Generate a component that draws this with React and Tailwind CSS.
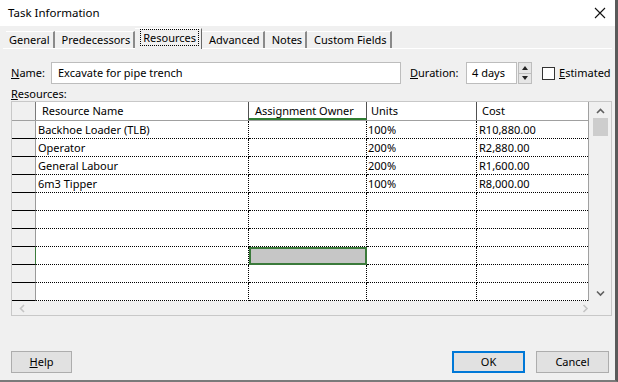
import React from "react";

const rows = [
  { name: "Backhoe Loader (TLB)", units: "100%", cost: "R10,880.00" },
  { name: "Operator", units: "200%", cost: "R2,880.00" },
  { name: "General Labour", units: "200%", cost: "R1,600.00" },
  { name: "6m3 Tipper", units: "100%", cost: "R8,000.00" },
  {}, {}, {}, {}, {}, {},
];

const tabs = ["General", "Predecessors", "Resources", "Advanced", "Notes", "Custom Fields"];

const Tab = ({ label, active, first }) =>
  active ? (
    <div className="h-[21px] -mb-px pl-[5px] pr-[2px] pt-[1px] border-t border-white border-r border-r-[#696969] bg-[#f0f0f0] relative z-10">
      <span className="px-[2px] border border-dotted border-black leading-[14px]">{label}</span>
    </div>
  ) : (
    <div
      className={
        "h-[17px] mt-[3px] pr-[3px] border-t border-white border-r-2 border-r-[#8a8a8a] leading-[16px] " +
        (first ? "pl-[3px]" : "pl-[7px]")
      }
    >
      {label}
    </div>
  );

const Chevron = ({ dir, color = "#606060" }) => {
  const d = {
    up: "M1 5 L4.5 1.5 L8 5",
    down: "M1 1.5 L4.5 5 L8 1.5",
    left: "M5 1 L1.5 4.5 L5 8",
    right: "M1.5 1 L5 4.5 L1.5 8",
  }[dir];
  const vert = dir === "up" || dir === "down";
  return (
    <svg width={vert ? 9 : 7} height={vert ? 7 : 9} viewBox={vert ? "0 0 9 7" : "0 0 7 9"}>
      <path d={d} fill="none" stroke={color} strokeWidth="1.6" />
    </svg>
  );
};

export default function App() {
  return (
    <div className="w-[618px] h-[382px] bg-[#f0f0f0] text-[11px] text-black font-['Noto_Sans',sans-serif] flex flex-col border-r-[3px] border-r-[#5a5a5a] border-b-2 border-b-[#7a7a7a] overflow-hidden">
      {/* title bar */}
      <div className="h-[26px] bg-white flex items-center justify-between pl-[8px] pr-[9px] shrink-0">
        <span className="text-[11.5px]">Task Information</span>
        <svg width="12" height="12" viewBox="0 0 12 12">
          <path d="M1 1 L11 11 M11 1 L1 11" stroke="#111" strokeWidth="1.1" />
        </svg>
      </div>

      {/* tabs */}
      <div className="flex items-end pl-[6px] h-[22px] shrink-0">
        {tabs.map((t, i) => (
          <Tab key={t} label={t} active={t === "Resources"} first={i === 0} />
        ))}
      </div>

      {/* panel */}
      <div className="mx-[3px] flex-1 border-t border-white flex flex-col">
        {/* name row */}
        <div className="flex items-center mt-[13px] h-[22px]">
          <span className="ml-[8px] w-[40px]">
            <span className="underline">N</span>ame:
          </span>
          <div className="w-[350px] h-[22px] border border-[#bdbdbd] bg-white pl-[6px] leading-[20px]">
            Excavate for pipe trench
          </div>
          <span className="ml-[9px] w-[56px]">
            <span className="underline">D</span>uration:
          </span>
          <div className="w-[51px] h-[22px] border border-[#bdbdbd] bg-white pl-[5px] leading-[20px]">4 days</div>
          <div className="w-[14px] h-[22px] ml-[1px] flex flex-col border border-[#bdbdbd] bg-[#e6e6e6]">
            <div className="flex-1 flex items-center justify-center border-b border-[#bdbdbd]">
              <svg width="6" height="4" viewBox="0 0 6 4"><path d="M0 4 L3 0 L6 4Z" fill="#222" /></svg>
            </div>
            <div className="flex-1 flex items-center justify-center">
              <svg width="6" height="4" viewBox="0 0 6 4"><path d="M0 0 L3 4 L6 0Z" fill="#222" /></svg>
            </div>
          </div>
          <div className="ml-[10px] w-[13px] h-[13px] border border-[#333] bg-white" />
          <span className="ml-[4px]">
            <span className="underline">E</span>stimated
          </span>
        </div>

        <div className="ml-[8px] mt-[2px] h-[15px] leading-[15px]">
          <span className="underline">R</span>esources:
        </div>

        {/* grid */}
        <div className="ml-[8px] w-[601px] h-[215px] border border-[#c8c8c8] bg-[#f0f0f0] flex flex-col">
          <div className="flex h-[199px]">
            <div className="w-[577px] bg-white flex flex-col border-r border-[#a0a0a0]">
              {/* header */}
              <div className="flex h-[19px] border-b border-[#a0a0a0] shrink-0">
                <div className="w-[24px] bg-[#f0f0f0] border-r border-[#7a7a7a]" />
                <div className="w-[213px] pl-[6px] border-r border-[#505050] leading-[18px]">Resource Name</div>
                <div className="w-[118px] pl-[6px] border-r border-[#505050] leading-[18px] border-b-2 border-b-[#2e7d32]">Assignment Owner</div>
                <div className="w-[110px] pl-[4px] border-r border-[#505050] leading-[18px]">Units</div>
                <div className="w-[111px] pl-[5px] leading-[18px]">Cost</div>
              </div>
              {rows.map((r, i) => (
                <div key={i} className="flex h-[18px] shrink-0">
                  <div
                    className={
                      "w-[24px] bg-[#f0f0f0] border-b border-black border-r " +
                      (i === 7 ? "border-r-[#3b7a3b]" : "border-r-[#9a9a9a]")
                    }
                  />
                  <div className="w-[213px] pl-[2px] border-r border-b border-dotted border-black leading-[17px] truncate">
                    {r.name}
                  </div>
                  {i === 7 ? (
                    <div className="w-[118px] border-2 border-[#3b7a3b] bg-[#c6c6c6]" />
                  ) : (
                    <div className="w-[118px] border-r border-b border-dotted border-black" />
                  )}
                  <div className="w-[110px] pl-[1px] border-r border-b border-dotted border-black leading-[17px]">
                    {r.units}
                  </div>
                  <div className="w-[111px] pl-[2px] border-b border-dotted border-black leading-[17px]">
                    {r.cost}
                  </div>
                </div>
              ))}
            </div>
            {/* vertical scrollbar */}
            <div className="flex-1 flex flex-col items-center pt-[6px] pb-[4px]">
              <Chevron dir="up" />
              <div className="w-[15px] h-[18px] bg-[#cdcdcd] mt-[3px]" />
              <div className="flex-1" />
              <Chevron dir="down" />
            </div>
          </div>
          {/* horizontal scrollbar */}
          <div className="flex-1 flex items-center justify-between pl-[7px] pr-[22px]">
            <Chevron dir="left" color="#c4c4c4" />
            <Chevron dir="right" color="#c4c4c4" />
          </div>
        </div>

        <div className="flex-1" />

        {/* buttons */}
        <div className="flex items-center h-[22px] mb-[7px] pl-[8px] pr-[3px]">
          <button className="w-[61px] h-[22px] border border-[#adadad] bg-[#e1e1e1]">
            <span className="underline">H</span>elp
          </button>
          <div className="flex-1" />
          <button className="w-[73px] h-[22px] border-2 border-[#0078d7] bg-[#e1e1e1]">OK</button>
          <button className="ml-[11px] w-[73px] h-[22px] border border-[#adadad] bg-[#e1e1e1]">Cancel</button>
        </div>
      </div>
    </div>
  );
}
